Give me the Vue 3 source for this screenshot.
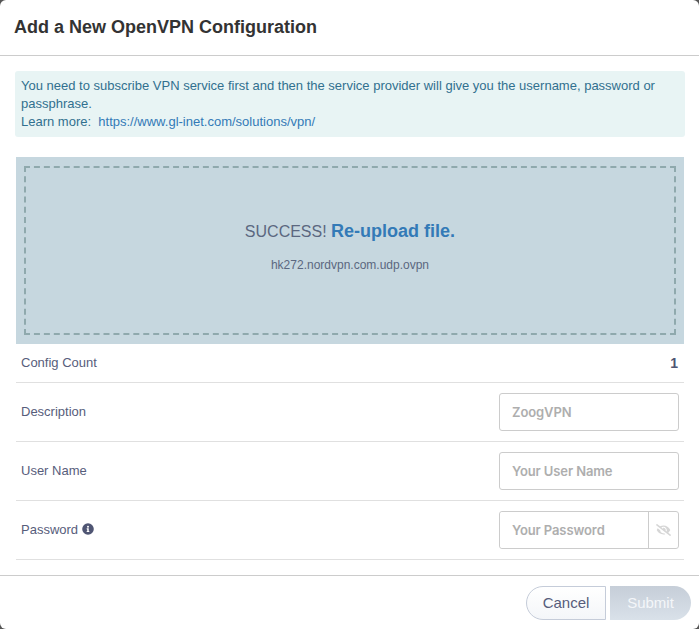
<script setup>
const rows = [
  { label: 'Description', placeholder: 'ZoogVPN' },
  { label: 'User Name', placeholder: 'Your User Name' },
]
</script>

<template>
  <div class="modal">
    <header class="head"><h1>Add a New OpenVPN Configuration</h1></header>
    <div class="body">
      <div class="alert">
        You need to subscribe VPN service first and then the service provider will give you the username, password or passphrase.<br />
        Learn more:&nbsp; <a href="#">https://www.gl-inet.com/solutions/vpn/</a>
      </div>
      <div class="drop">
        <div class="dash">
          <p class="status">SUCCESS! <b>Re-upload file.</b></p>
          <p class="file">hk272.nordvpn.com.udp.ovpn</p>
        </div>
      </div>
      <div class="row first">
        <span class="label">Config Count</span>
        <b class="count">1</b>
      </div>
      <div v-for="r in rows" :key="r.label" class="row">
        <span class="label">{{ r.label }}</span>
        <input class="field" :placeholder="r.placeholder" />
      </div>
      <div class="row">
        <span class="label">Password
          <svg class="info" viewBox="0 0 512 512" width="12" height="12"><path fill="#4f5573" d="M256 8a248 248 0 1 0 0 496 248 248 0 0 0 0-496zm0 110a42 42 0 1 1 0 84 42 42 0 0 1 0-84zm56 254c0 7-5 12-12 12h-88c-7 0-12-5-12-12v-24c0-7 5-12 12-12h12v-64h-12c-7 0-12-5-12-12v-24c0-7 5-12 12-12h64c7 0 12 5 12 12v100h12c7 0 12 5 12 12v24z"/></svg>
        </span>
        <div class="group">
          <input class="field inner" placeholder="Your Password" />
          <span class="addon">
            <svg viewBox="0 0 640 512" width="15" height="12" fill="#d6d6d6"><path d="M320 400c-76 0-137-59-142-133L73 186c-14 17-27 36-37 56a32 32 0 0 0 0 29c54 106 161 177 284 177 27 0 53-4 78-10l-52-40c-9 2-17 2-26 2zM634 458 524 373c34-28 61-63 80-102a32 32 0 0 0 0-29C550 136 443 64 320 64c-52 0-101 13-146 36L46 3a16 16 0 0 0-22 3L4 31a16 16 0 0 0 3 23l589 455a16 16 0 0 0 22-3l20-25a16 16 0 0 0-4-23zM450 316l-39-30c3-9 5-19 5-30a95 95 0 0 0-123-91c6 8 9 18 9 27 0 5-1 9-2 13l-73-56c22-18 50-29 80-29a144 144 0 0 1 143 196z"/></svg>
          </span>
        </div>
      </div>
    </div>
    <footer class="foot">
      <button class="btn cancel">Cancel</button>
      <button class="btn submit">Submit</button>
    </footer>
  </div>
</template>

<style>
html, body { margin: 0; background: #555; }
</style>

<style scoped>
.modal {
  width: 699px;
  height: 629px;
  background: #fff;
  border-radius: 6px;
  box-sizing: border-box;
  font-family: "Liberation Sans", Arial, sans-serif;
  display: flex;
  flex-direction: column;
  overflow: hidden;
}
.head {
  height: 56px;
  box-sizing: border-box;
  border-bottom: 1px solid #ccc;
  padding: 0 14px;
  display: flex;
  align-items: center;
}
h1 {
  margin: 0 0 1px;
  font-size: 18px;
  font-weight: 700;
  color: #333;
}
.body {
  flex: 1;
  padding: 15px 14px 0 15px;
}
.alert {
  background: #e8f4f4;
  border-radius: 3px;
  padding: 6px 6px;
  height: 66px;
  box-sizing: border-box;
  font-size: 13px;
  line-height: 18px;
  color: #31708f;
}
.alert a { color: #337ab7; text-decoration: none; }
.drop {
  margin: 20px 1px 0;
  height: 187px;
  background: #c6d7df;
  padding: 9px 8px;
  box-sizing: border-box;
}
.dash {
  height: 100%;
  box-sizing: border-box;
  border: 2px dashed #8fa9ad;
  text-align: center;
  display: flex;
  flex-direction: column;
  align-items: center;
}
.status {
  margin: 52px 0 0;
  font-size: 16px;
  line-height: 22px;
  color: #5b6780;
}
.status b { color: #337ab7; font-size: 18px; }
.file {
  margin: 14px 0 0;
  font-size: 12px;
  line-height: 16px;
  color: #5b6780;
}
.row {
  height: 59px;
  margin: 0 1px;
  box-sizing: border-box;
  border-bottom: 1px solid #e0e0e0;
  padding: 0 5px;
  display: flex;
  align-items: center;
  justify-content: space-between;
}
.row.first { height: 39px; }
.label {
  font-size: 13px;
  color: #575d7b;
  display: inline-flex;
  align-items: center;
  gap: 4px;
  margin-bottom: 2px;
}
.count { font-size: 14px; color: #4f5573; margin-right: 1px; }
.field {
  width: 180px;
  height: 38px;
  box-sizing: border-box;
  border: 1px solid #ccc;
  border-radius: 3px;
  padding: 0 12px;
  font-family: Inter, sans-serif;
  font-size: 13px;
  font-weight: 600;
  letter-spacing: -0.1px;
  outline: none;
}
.field::placeholder { color: #aeaeae; opacity: 1; }
.group { display: flex; width: 180px; height: 38px; border: 1px solid #ccc; border-radius: 3px; box-sizing: border-box; }
.field.inner { flex: 1; width: 0; height: 36px; border: none; }
.addon {
  width: 29px;
  border-left: 1px solid #ccc;
  display: flex;
  align-items: center;
  justify-content: center;
}
.foot {
  margin-top: 15px;
  height: 54px;
  box-sizing: border-box;
  border-top: 1px solid #ccc;
  padding: 10px 8px 0 0;
  display: flex;
  justify-content: flex-end;
  align-items: flex-start;
  gap: 4px;
}
.btn {
  height: 34px;
  font-family: "Liberation Sans", Arial, sans-serif;
  font-size: 15px;
  box-sizing: border-box;
  padding: 0 0 1px;
}
.cancel {
  width: 80px;
  border: 1px solid #c5ccd9;
  border-radius: 17px 0 0 17px;
  background: linear-gradient(#fff, #f4f6f9);
  color: #575d7b;
}
.submit {
  width: 81px;
  border: none;
  border-radius: 0 17px 17px 0;
  background: linear-gradient(#c6ced8, #d9e1e9);
  color: #f4f6f9;
}
</style>
